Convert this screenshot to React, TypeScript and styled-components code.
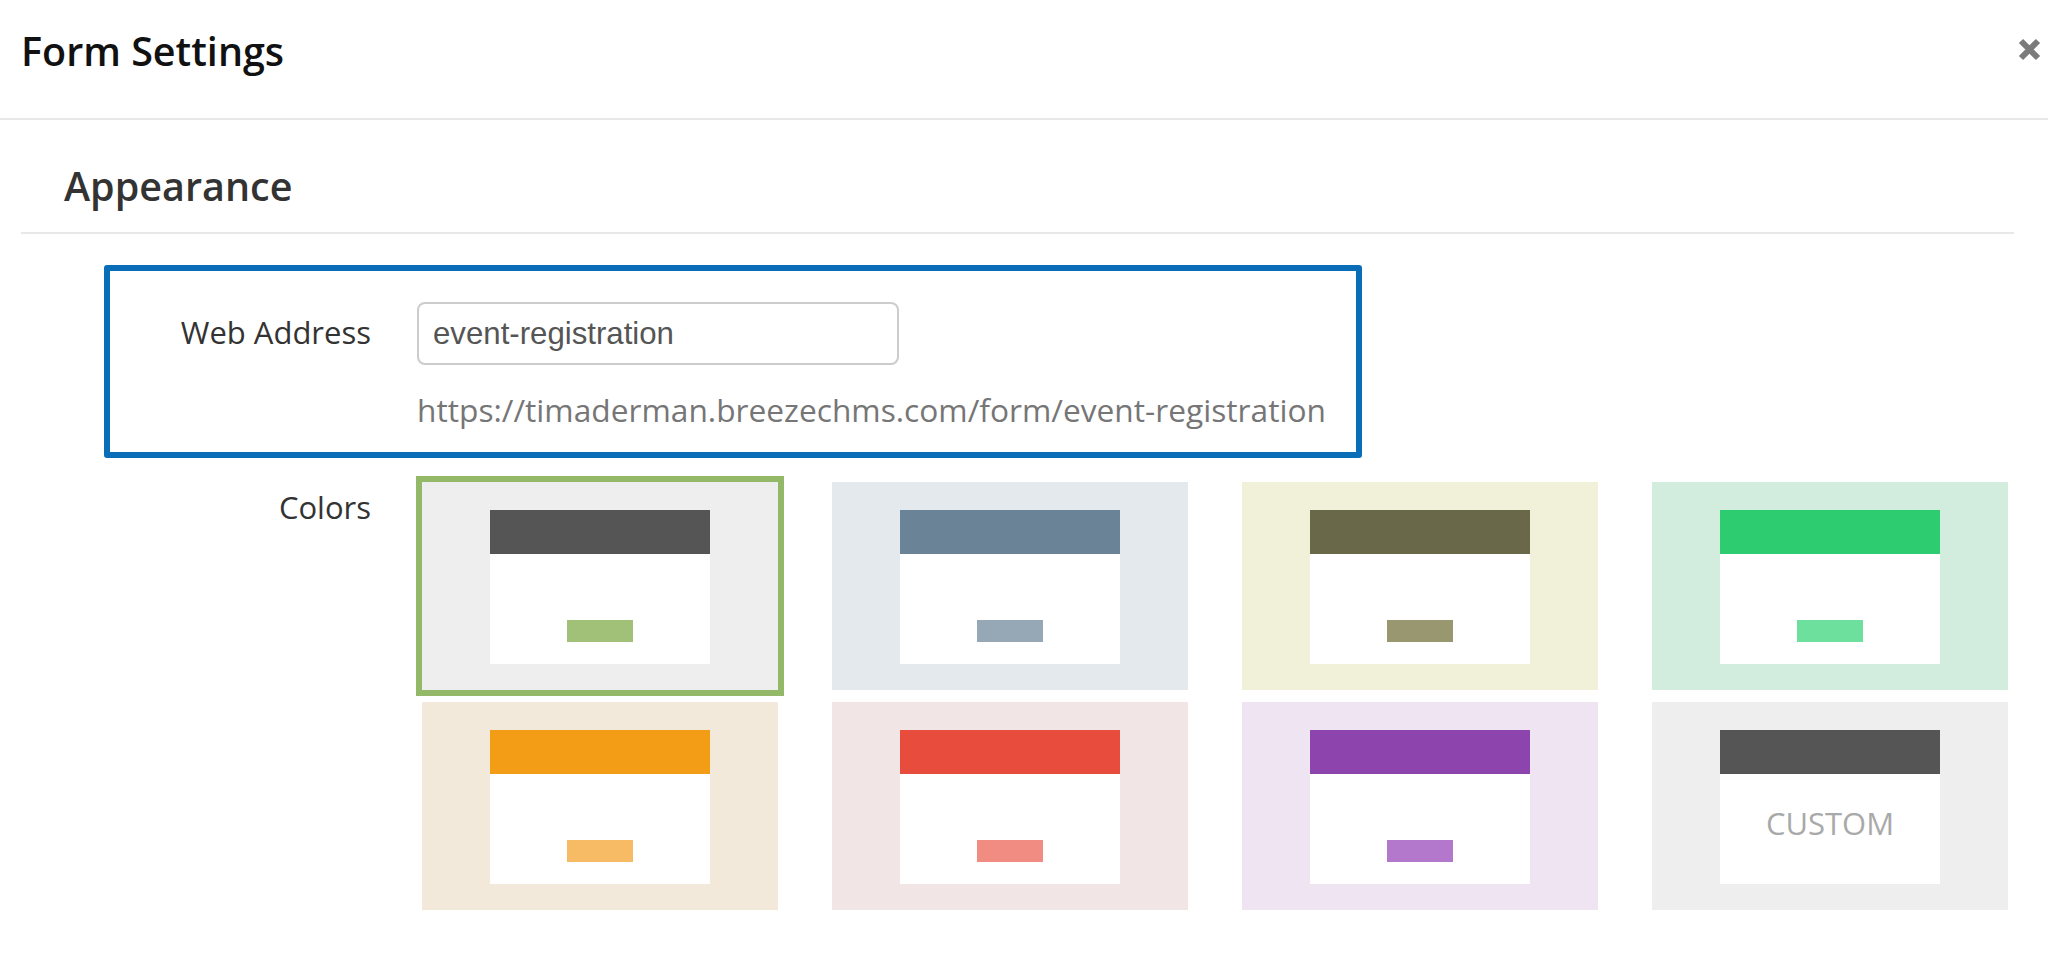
import React from "react";
import styled, { createGlobalStyle } from "styled-components";

const GlobalStyle = createGlobalStyle`
  html, body {
    margin: 0;
    padding: 0;
    background: #ffffff;
  }

  body {
    font-family: "Open Sans", "Noto Sans", sans-serif;
    color: #333333;
  }

  * {
    box-sizing: border-box;
  }
`;

interface Theme {
  background: string;
  bar: string;
  button?: string;
  selected?: boolean;
  custom?: boolean;
}

const themes: Theme[] = [
  { background: "#eeeeee", bar: "#555555", button: "#a0c177", selected: true },
  { background: "#e4e9ed", bar: "#6a8397", button: "#96a8b5" },
  { background: "#f1f0d8", bar: "#696848", button: "#999770" },
  { background: "#d2ecdd", bar: "#2ecc71", button: "#6ee09d" },
  { background: "#f3e9db", bar: "#f39c15", button: "#f8bb65" },
  { background: "#f1e6e5", bar: "#e74c3c", button: "#f18c82" },
  { background: "#efe4f2", bar: "#8e44ad", button: "#b378cc" },
  { background: "#eeeeee", bar: "#555555", custom: true },
];

export default function App() {
  return (
    <>
      <GlobalStyle />
      <Modal>
        <Header>
          <Title>Form Settings</Title>
          <CloseButton aria-label="Close">
            <svg width="23" height="23" viewBox="0 0 23 23">
              <path
                d="M3 3 L20 20 M20 3 L3 20"
                stroke="currentColor"
                strokeWidth="6"
                strokeLinecap="butt"
              />
            </svg>
          </CloseButton>
        </Header>

        <Body>
          <SectionHeader>
            <SectionTitle>Appearance</SectionTitle>
          </SectionHeader>

          <Form>
            <HighlightBox>
              <FormRow>
                <Label>Web Address</Label>
                <Control>
                  <TextInput defaultValue="event-registration" />
                  <HelpText>
                    https://timaderman.breezechms.com/form/event-registration
                  </HelpText>
                </Control>
              </FormRow>
            </HighlightBox>

            <ColorsRow>
              <Label>Colors</Label>
              <SwatchGrid>
                {themes.map((theme, i) => (
                  <Swatch
                    key={i}
                    $background={theme.background}
                    $selected={theme.selected}
                  >
                    <PreviewCard>
                      <PreviewBar $color={theme.bar} />
                      <PreviewBody>
                        {theme.custom ? (
                          <CustomText>CUSTOM</CustomText>
                        ) : (
                          <PreviewButton $color={theme.button} />
                        )}
                      </PreviewBody>
                    </PreviewCard>
                  </Swatch>
                ))}
              </SwatchGrid>
            </ColorsRow>
          </Form>
        </Body>
      </Modal>
    </>
  );
}

const Modal = styled.div`
  width: 2048px;
  min-height: 966px;
  background: #ffffff;
`;

const Header = styled.div`
  height: 120px;
  display: flex;
  align-items: flex-start;
  justify-content: space-between;
  padding: 30px 7px 0 21px;
  border-bottom: 2px solid #e8e8e8;
`;

const Title = styled.h4`
  margin: 0;
  font-size: 39.5px;
  line-height: 43px;
  font-weight: 600;
  color: #111111;
`;

const CloseButton = styled.button`
  margin-top: 8px;
  padding: 0;
  border: none;
  background: none;
  color: #7b7b7b;
  cursor: pointer;
  display: flex;

  svg {
    display: block;
  }
`;

const Body = styled.div`
  padding: 0 34px 0 21px;
`;

const SectionHeader = styled.div`
  padding: 45px 0 24px 43px;
  border-bottom: 2px solid #e8e8e8;
`;

const SectionTitle = styled.h3`
  margin: 0;
  font-size: 39.5px;
  line-height: 43px;
  font-weight: 600;
  color: #333333;
`;

const Form = styled.div`
  padding: 31px 0 0 83px;
`;

const HighlightBox = styled.div`
  width: 1258px;
  border: 6px solid #0a6db8;
  border-radius: 3px;
  padding: 31px 32px 21px 0;
`;

const FormRow = styled.div`
  display: grid;
  grid-template-columns: 261px 1fr;
  column-gap: 46px;
  align-items: start;
`;

const ColorsRow = styled(FormRow)`
  margin-top: 24px;
  padding-left: 6px;
`;

const Label = styled.label`
  text-align: right;
  font-size: 31px;
  line-height: 42px;
  color: #333333;
  padding-top: 9px;

  ${ColorsRow} > & {
    padding-top: 4px;
  }
`;

const Control = styled.div`
  display: flex;
  flex-direction: column;
`;

const TextInput = styled.input`
  width: 482px;
  height: 63px;
  padding: 0 14px;
  border: 2px solid #cccccc;
  border-radius: 8px;
  font-family: "Liberation Sans", Arial, sans-serif;
  font-size: 31.2px;
  color: #555555;
  background: #ffffff;
  outline: none;
`;

const HelpText = styled.span`
  margin-top: 24px;
  font-size: 31.7px;
  line-height: 42px;
  color: #767676;
  white-space: nowrap;
`;

const SwatchGrid = styled.div`
  display: grid;
  grid-template-columns: repeat(4, 356px);
  grid-auto-rows: 208px;
  column-gap: 54px;
  row-gap: 12px;
  padding-left: 5px;
`;

const Swatch = styled.div<{ $background: string; $selected?: boolean }>`
  background: ${(p) => p.$background};
  display: flex;
  justify-content: center;
  align-items: flex-start;
  padding-top: 28px;
  cursor: pointer;
  outline: ${(p) => (p.$selected ? "6px solid #93b868" : "none")};
`;

const PreviewCard = styled.div`
  width: 220px;
  height: 154px;
  background: #ffffff;
  display: flex;
  flex-direction: column;
`;

const PreviewBar = styled.div<{ $color: string }>`
  height: 44px;
  background: ${(p) => p.$color};
`;

const PreviewBody = styled.div`
  flex: 1;
  display: flex;
  align-items: flex-end;
  justify-content: center;
  padding-bottom: 22px;
`;

const PreviewButton = styled.div<{ $color?: string }>`
  width: 66px;
  height: 22px;
  background: ${(p) => p.$color};
`;

const CustomText = styled.span`
  align-self: center;
  margin-top: 10px;
  font-size: 31px;
  line-height: 40px;
  color: #a9a9a9;
`;
